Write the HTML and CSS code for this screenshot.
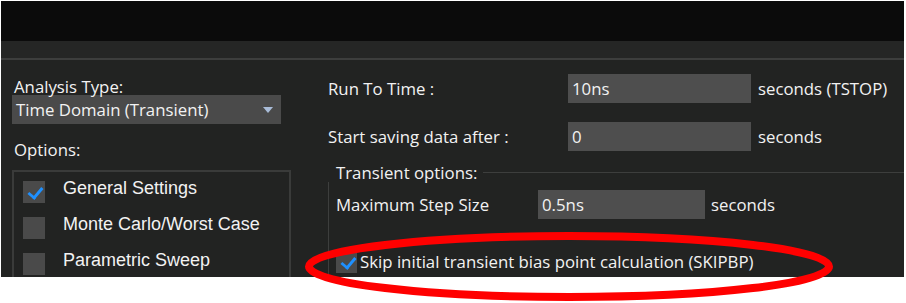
FILE: index.html
```html
<!DOCTYPE html>
<html>

<head>
    <title>Simulation Settings</title>
    <meta name="viewport" content="width=device-width, initial-scale=1">
    <link rel="stylesheet" href="styles.css">
</head>

<body>
    <div class="window">
        <div class="titlebar"></div>
        <div class="tabbar"></div>

        <div class="content">
            <div class="left-panel">
                <div class="caption">Analysis Type:</div>
                <div class="dropdown">
                    <span>Time Domain (Transient)</span>
                    <span class="arrow"></span>
                </div>
                <div class="caption options-caption">Options:</div>
                <div class="options-box">
                    <div class="option">
                        <span class="checkbox checked"></span>
                        <span class="option-label">General Settings</span>
                    </div>
                    <div class="option">
                        <span class="checkbox"></span>
                        <span class="option-label">Monte Carlo/Worst Case</span>
                    </div>
                    <div class="option">
                        <span class="checkbox"></span>
                        <span class="option-label">Parametric Sweep</span>
                    </div>
                </div>
            </div>

            <div class="right-panel">
                <div class="form-row">
                    <div class="label">Run To Time :</div>
                    <div class="input">10ns</div>
                    <div class="unit">seconds (TSTOP)</div>
                </div>
                <div class="form-row second">
                    <div class="label">Start saving data after :</div>
                    <div class="input">0</div>
                    <div class="unit">seconds</div>
                </div>

                <div class="group">
                    <div class="group-title">
                        <span>Transient options:</span>
                        <span class="group-line"></span>
                    </div>
                    <div class="group-body">
                        <div class="form-row step-row">
                            <div class="label">Maximum Step Size</div>
                            <div class="input">0.5ns</div>
                            <div class="unit">seconds</div>
                        </div>
                        <div class="check-row">
                            <span class="checkbox small checked"></span>
                            <span>Skip initial transient bias point calculation (SKIPBP)</span>
                        </div>
                    </div>
                </div>
            </div>
        </div>
    </div>

    <!-- red highlight drawn over the screenshot -->
    <svg class="highlight" width="906" height="303" viewBox="0 0 906 303">
        <ellipse cx="569" cy="266.5" rx="260" ry="30.5" fill="none" stroke="#ff0000" stroke-width="8" />
    </svg>
</body>

</html>
```

FILE: styles.css
```css
body {
    margin: 0;
    padding: 1px 0 0 1px;
    background: #ffffff;
    font-family: "Open Sans", "Noto Sans", sans-serif;
    color: #f2f2f2;
}

.window {
    width: 903px;
    height: 276px;
    background: #222322;
    overflow: hidden;
}

.titlebar {
    height: 40px;
    background: #0b0b0b;
}

.tabbar {
    height: 17px;
    background: #252625;
    border-bottom: 2px solid #3d3e3d;
}

.content {
    display: flex;
}

/* Left side: analysis type and options */
.left-panel {
    width: 315px;
    padding: 18px 0 0 11px;
}

.caption {
    font-size: 16.8px;
    line-height: 18px;
    padding-left: 2px;
}

.dropdown {
    width: 269px;
    height: 29px;
    margin-top: -1px;
    background: #4a4a4a;
    display: flex;
    align-items: center;
    justify-content: space-between;
    padding-left: 4px;
    box-sizing: border-box;
    font-size: 16.8px;
}

.arrow {
    width: 0;
    height: 0;
    margin-right: 8px;
    border-left: 5px solid transparent;
    border-right: 5px solid transparent;
    border-top: 6px solid #a9bcd8;
}

.options-caption {
    margin-top: 17px;
}

.options-box {
    width: 279px;
    height: 120px;
    margin-top: 11px;
    border: 2px solid #3a3b3a;
    padding: 9px 0 0 9px;
    box-sizing: border-box;
}

.option {
    display: flex;
    align-items: flex-start;
    height: 36px;
}

.option-label {
    font-family: "Liberation Sans", Arial, sans-serif;
    font-size: 18px;
    line-height: 18px;
    margin-left: 18px;
    margin-top: -2px;
}

.checkbox {
    display: inline-block;
    width: 22px;
    height: 22px;
    background: #4a4a4a;
    position: relative;
    flex-shrink: 0;
}

.checkbox.small {
    width: 21px;
}

.checkbox.checked:after {
    content: "";
    position: absolute;
    left: 5px;
    top: 4px;
    width: 12px;
    height: 6px;
    border-left: 3px solid #1e90ff;
    border-bottom: 3px solid #1e90ff;
    transform: translate(0, 2px) rotate(-50deg) scaleX(0.95);
    transform-origin: center;
}

/* Right side: transient settings */
.right-panel {
    flex: 1;
    padding-top: 14px;
}

.form-row {
    display: grid;
    grid-template-columns: 241px 183px auto;
    align-items: center;
    font-size: 16.8px;
    white-space: nowrap;
}

.form-row.second {
    margin-top: 19px;
}

.label {
    padding-left: 1px;
}

.input {
    height: 29px;
    line-height: 29px;
    background: #4e4e4e;
    padding-left: 4px;
    box-sizing: border-box;
}

.unit {
    padding-left: 7px;
}

.group {
    margin-top: 11px;
}

.group-title {
    display: flex;
    align-items: center;
    height: 20px;
    font-size: 16.8px;
    padding-left: 9px;
}

.group-line {
    flex: 1;
    height: 1px;
    background: #3d3e3d;
    margin-left: 6px;
}

.group-body {
    margin-left: 1px;
    border-left: 1px solid #3d3e3d;
    padding: 8px 0 0 7px;
    height: 100px;
}

.step-row {
    grid-template-columns: 202px 167px auto;
}

.step-row .label {
    padding-left: 0;
}

.step-row .unit {
    padding-left: 6px;
}

.check-row {
    display: flex;
    align-items: center;
    margin-top: 31px;
    font-size: 16.8px;
    white-space: nowrap;
}

.check-row .checkbox {
    margin-right: 3px;
}

.highlight {
    position: absolute;
    left: 0;
    top: 0;
    pointer-events: none;
}
```
